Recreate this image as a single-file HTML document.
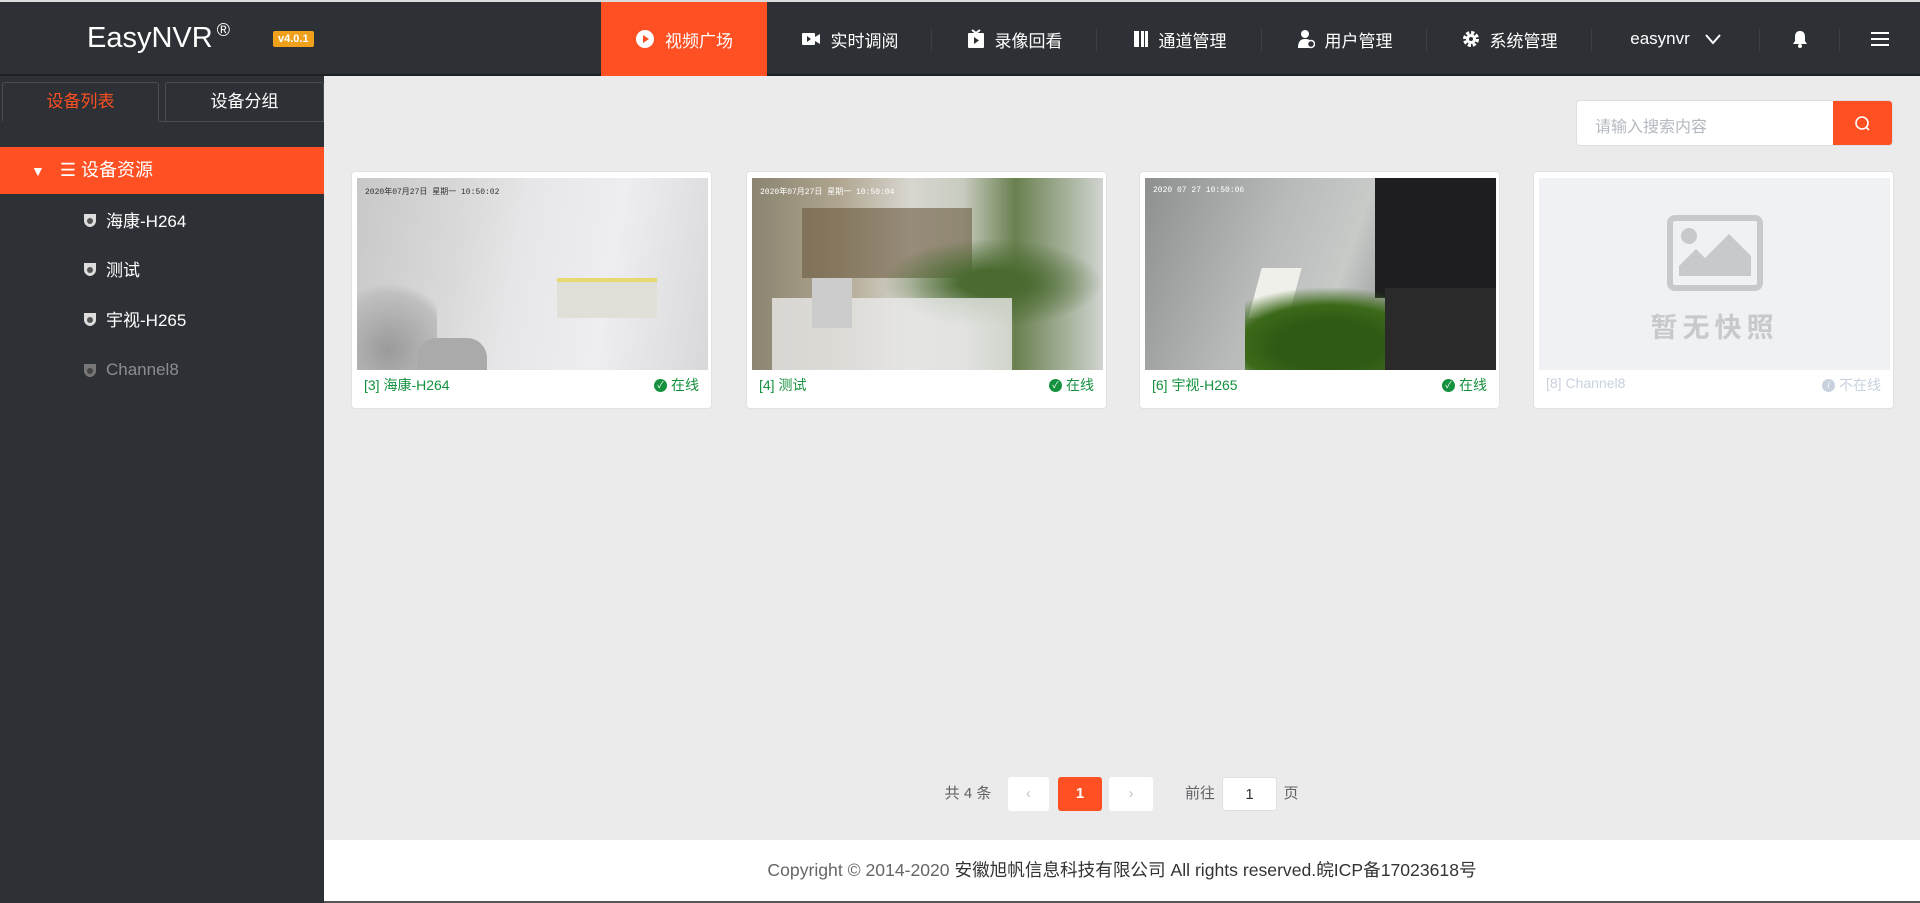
<!DOCTYPE html>
<html><head><meta charset="utf-8"><style>
*{margin:0;padding:0;box-sizing:border-box}
body{width:1920px;height:903px;overflow:hidden;background:#ebebeb;font-family:"Liberation Sans","Noto Sans CJK SC",sans-serif;position:relative}
.top{position:absolute;left:0;top:0;width:1920px;height:76px;background:#2d3035;border-top:2px solid #ddd;border-bottom:2px solid #1e1f22}
.logo{position:absolute;left:87px;top:20px;color:#fff;font-size:29px}
.logo sup{font-size:18px;vertical-align:top;position:relative;top:-2px;margin-left:4px}
.badge{position:absolute;left:273px;top:29px;background:#f0a01a;color:#fff;font-size:11px;font-weight:bold;padding:2px 5px;border-radius:2px}
.nav{position:absolute;top:0;height:74px;display:flex;align-items:center;justify-content:center;color:#fff;font-size:17px;gap:10px}
.nav.sep:after{content:"";position:absolute;right:0;top:26px;height:24px;border-right:1px solid #3b3e44}
.nav.act{background:#ff5023}
.side{position:absolute;left:0;top:76px;width:324px;height:827px;background:#2d3035}
.tab{position:absolute;top:6px;height:39px;border:1px solid #4a4d52;border-bottom:none;border-radius:3px 3px 0 0;color:#fff;font-size:17px;text-align:center;line-height:38px}
.res{position:absolute;left:0;top:71px;width:324px;height:47px;background:#ff5023;color:#fff;font-size:18px;line-height:47px;padding-left:31px}
.it{position:absolute;left:82px;color:#fff;font-size:17px;display:flex;align-items:center;gap:8px}
.it.off{color:#8a8d92}
.ic{width:16px;height:16px}
.search{position:absolute;left:1576px;top:100px;width:317px;height:46px;background:#fff;border:1px solid #dcdfe6;border-radius:4px;overflow:hidden}
.search span{position:absolute;left:18px;top:12px;color:#b4b8c0;font-size:16px}
.search .b{position:absolute;right:0;top:0;width:59px;height:46px;background:#ff5023}
.card{position:absolute;top:171px;width:361px;height:238px;background:#fff;border:1px solid #e2e2e2;border-radius:4px}
.img{position:absolute;left:5px;top:6px;width:351px;height:192px;overflow:hidden}
.lab{position:absolute;left:12px;top:203px;font-size:14px;color:#14913e}
.st{position:absolute;right:12px;top:203px;font-size:14px;color:#14913e;display:flex;align-items:center;gap:4px}
.dot{width:13px;height:13px;border-radius:50%;background:#14913e;color:#fff;font-size:9px;line-height:13px;text-align:center}
.ts{position:absolute;left:8px;top:8px;font-size:8px;color:#fff;font-family:"Liberation Mono",monospace}
.pg{position:absolute;top:777px;height:34px;font-size:15px;color:#606266;line-height:34px;text-align:center;border-radius:3px}
.foot{position:absolute;left:324px;top:840px;width:1596px;height:63px;background:#fff;text-align:center;line-height:60px;font-size:17.6px;color:#333;border-bottom:2px solid #555}
</style></head><body>
<div class="top">
<div class="logo">EasyNVR<sup>®</sup></div>
<div class="badge">v4.0.1</div>
<div class="nav act" style="left:601px;width:166px"><svg width="20" height="20" viewBox="0 0 20 20"><circle cx="10" cy="10" r="9" fill="#fff"/><path d="M8 6l6 4-6 4z" fill="#ff5023"/></svg>视频广场</div>
<div class="nav sep" style="left:767px;width:165px"><svg width="20" height="16" viewBox="0 0 20 16"><rect x="1" y="2" width="13" height="12" rx="1" fill="#fff"/><path d="M14 6l5-3v10l-5-3z" fill="#fff"/><path d="M6 5l4 3-4 3z" fill="#2d3035"/></svg>实时调阅</div>
<div class="nav sep" style="left:932px;width:165px"><svg width="18" height="20" viewBox="0 0 18 20"><rect x="1" y="4" width="16" height="15" rx="1" fill="#fff"/><path d="M5 1l4 3 4-3" stroke="#fff" stroke-width="2" fill="none"/><path d="M7 8l5 3.5-5 3.5z" fill="#2d3035"/></svg>录像回看</div>
<div class="nav sep" style="left:1097px;width:165px"><svg width="16" height="18" viewBox="0 0 16 18"><rect x="1" y="1" width="5" height="16" fill="#fff"/><rect x="8" y="1" width="3" height="16" fill="#fff"/><rect x="12" y="1" width="3" height="16" fill="#fff"/></svg>通道管理</div>
<div class="nav sep" style="left:1262px;width:165px"><svg width="18" height="20" viewBox="0 0 18 20"><circle cx="8" cy="5" r="4" fill="#fff"/><path d="M1 19c0-7 3-9 7-9s5 1 6 3v6z" fill="#fff"/><circle cx="14" cy="15" r="3.5" fill="#2d3035" stroke="#fff" stroke-width="1.5"/></svg>用户管理</div>
<div class="nav sep" style="left:1427px;width:165px"><svg width="18" height="18" viewBox="0 0 18 18"><circle cx="9" cy="9" r="6" fill="none" stroke="#fff" stroke-width="4" stroke-dasharray="3 1.7"/><circle cx="9" cy="9" r="5" fill="#fff"/><circle cx="9" cy="9" r="2" fill="#2d3035"/></svg>系统管理</div>
<div class="nav sep" style="left:1592px;width:168px;gap:14px">easynvr<svg width="18" height="12" viewBox="0 0 18 12"><path d="M2 2l7 8 7-8" stroke="#fff" stroke-width="2" fill="none"/></svg></div>
<div class="nav sep" style="left:1760px;width:80px"><svg width="16" height="18" viewBox="0 0 16 18"><path d="M8 1c4 0 5 3 5 6v4l2 3H1l2-3V7c0-3 1-6 5-6z" fill="#fff"/><circle cx="8" cy="16" r="2" fill="#fff"/></svg></div>
<div class="nav" style="left:1840px;width:80px"><svg width="18" height="14" viewBox="0 0 18 14"><path d="M0 1h18M0 7h18M0 13h18" stroke="#fff" stroke-width="2"/></svg></div>
</div>
<div class="side">
<div class="tab" style="left:2px;width:157px;color:#ff5023">设备列表</div>
<div class="tab" style="left:165px;width:159px">设备分组</div>
<div style="position:absolute;left:159px;top:45px;width:165px;border-top:1px solid #4a4d52;"></div>
<div class="res"><span style="font-size:14px">▼</span>&nbsp;&nbsp;&nbsp;☰ 设备资源</div>
<div class="it" style="top:131px"><svg class="ic" viewBox="0 0 16 16"><path d="M2 2h12v7c0 3-3 6-6 6s-6-3-6-6z" fill="#ddd"/><circle cx="8" cy="9" r="3" fill="#555"/></svg>海康-H264</div>
<div class="it" style="top:180px"><svg class="ic" viewBox="0 0 16 16"><path d="M2 2h12v7c0 3-3 6-6 6s-6-3-6-6z" fill="#ddd"/><circle cx="8" cy="9" r="3" fill="#555"/></svg>测试</div>
<div class="it" style="top:230px"><svg class="ic" viewBox="0 0 16 16"><path d="M2 2h12v7c0 3-3 6-6 6s-6-3-6-6z" fill="#ddd"/><circle cx="8" cy="9" r="3" fill="#555"/></svg>宇视-H265</div>
<div class="it off" style="top:284px"><svg class="ic" viewBox="0 0 16 16"><path d="M2 2h12v7c0 3-3 6-6 6s-6-3-6-6z" fill="#777"/><circle cx="8" cy="9" r="3" fill="#444"/></svg>Channel8</div>
</div>
<div class="search"><span>请输入搜索内容</span><div class="b"><svg width="59" height="46" viewBox="0 0 59 46"><circle cx="29" cy="22" r="6" fill="none" stroke="#fff" stroke-width="1.6"/><path d="M33 26l3 3" stroke="#fff" stroke-width="1.6"/></svg></div></div>

<div class="card" style="left:351px"><div class="img" style="background:linear-gradient(100deg,#c8c8c8 0%,#dadada 30%,#e6e6e8 45%,#eeeef0 70%,#d8d8da 100%)">
<div style="position:absolute;left:0;top:90px;width:80px;height:102px;background:radial-gradient(circle at 40% 80%,#9a9a9a,#c0c0c0 60%,transparent 70%)"></div>
<div style="position:absolute;left:200px;top:100px;width:100px;height:40px;background:#e0e0d8;border-top:4px solid #e8d870"></div>
<div style="position:absolute;left:60px;top:160px;width:70px;height:32px;background:#aaa;border-radius:20px 20px 0 0"></div>
<span class="ts" style="color:#333">2020年07月27日 星期一 10:50:02</span></div>
<div class="lab">[3] 海康-H264</div><div class="st"><div class="dot">✓</div>在线</div></div>

<div class="card" style="left:746px"><div class="img" style="background:linear-gradient(90deg,#8a8470 0%,#b0a690 25%,#d8d6d0 45%,#c8ccc0 60%,#6a8050 75%,#d0d4d0 100%)">
<div style="position:absolute;left:50px;top:30px;width:170px;height:70px;background:#6a5a40;opacity:.6"></div>
<div style="position:absolute;left:130px;top:60px;width:221px;height:90px;background:radial-gradient(ellipse,#4a6a30 20%,transparent 70%)"></div>
<div style="position:absolute;left:20px;top:120px;width:240px;height:72px;background:#e8e8e8;opacity:.8"></div>
<div style="position:absolute;left:60px;top:100px;width:40px;height:50px;background:#ccc"></div>
<span class="ts">2020年07月27日 星期一 10:50:04</span></div>
<div class="lab">[4] 测试</div><div class="st"><div class="dot">✓</div>在线</div></div>

<div class="card" style="left:1139px"><div class="img" style="background:linear-gradient(110deg,#8e9090 0%,#b8baba 35%,#c8cac8 55%,#9a9c9c 70%)">
<div style="position:absolute;left:230px;top:0;width:121px;height:120px;background:#1e1e20"></div>
<div style="position:absolute;left:110px;top:90px;width:40px;height:50px;background:#f0f0ea;transform:skewX(-15deg)"></div>
<div style="position:absolute;left:100px;top:110px;width:210px;height:82px;background:radial-gradient(ellipse at 40% 70%,#2e5a14 30%,#3c6a1a 50%,transparent 72%)"></div>
<div style="position:absolute;left:240px;top:110px;width:111px;height:82px;background:#2a2a2a"></div>
<span class="ts">2020 07 27 10:50:06</span></div>
<div class="lab">[6] 宇视-H265</div><div class="st"><div class="dot">✓</div>在线</div></div>

<div class="card" style="left:1533px"><div class="img" style="background:#f0f1f4">
<svg style="position:absolute;left:127px;top:36px" width="98" height="78" viewBox="0 0 98 78"><rect x="4" y="4" width="90" height="70" rx="5" fill="none" stroke="#c8c9cc" stroke-width="6"/><circle cx="23" cy="22" r="8" fill="#c8c9cc"/><path d="M13 62V52l17-17 9 9 24-24 22 22v20z" fill="#c8c9cc"/></svg>
<div style="position:absolute;left:0;width:351px;top:128px;text-align:center;font-size:27px;font-weight:bold;color:#c8c9cc;letter-spacing:5px">暂无快照</div></div>
<div class="lab" style="color:#c8d2de">[8] Channel8</div><div class="st" style="color:#c8d2de"><div class="dot" style="background:#c8d2de;font-style:italic">i</div>不在线</div></div>

<div class="pg" style="left:936px;width:64px">共 4 条</div>
<div class="pg" style="left:1008px;width:41px;background:#fff;color:#c0c4cc">‹</div>
<div class="pg" style="left:1058px;width:44px;background:#ff5023;color:#fff;font-weight:bold">1</div>
<div class="pg" style="left:1109px;width:44px;background:#fff;color:#c0c4cc">›</div>
<div class="pg" style="left:1180px;width:40px">前往</div>
<div class="pg" style="left:1222px;width:55px;background:#fff;border:1px solid #dcdfe6;color:#333">1</div>
<div class="pg" style="left:1280px;width:22px">页</div>
<div class="foot"><span style="color:#666">Copyright © 2014-2020 </span>安徽旭帆信息科技有限公司 All rights reserved.皖ICP备17023618号</div>
</body></html>
